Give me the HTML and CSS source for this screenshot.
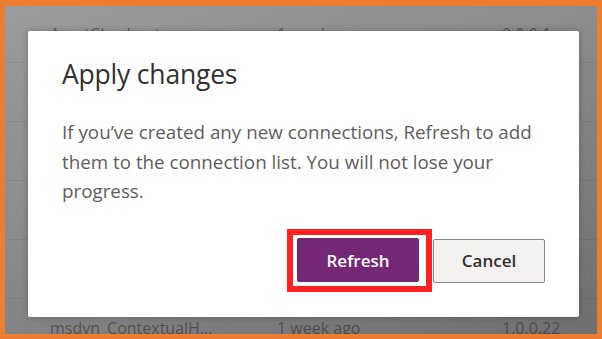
FILE: index.html
```html
<!DOCTYPE html>
<html>
<head>
<meta charset="utf-8">
<link rel="stylesheet" href="styles.css">
</head>
<body>
<div class="frame">
  <div class="list">
    <div class="row first"><span class="c-name">AssetCheckout</span><span class="c-date">1 week ago</span><span class="c-ver">0.0.0.1</span></div>
    <div class="row"></div>
    <div class="row"></div>
    <div class="row"></div>
    <div class="row"></div>
    <div class="row"><span class="c-name">msdyn_ContextualH...</span><span class="c-date">1 week ago</span><span class="c-ver">1.0.0.22</span></div>
  </div>
  <div class="dialog">
    <h1 class="title">Apply changes</h1>
    <p class="msg">If you’ve created any new connections, Refresh to add them to the connection list. You will not lose your progress.</p>
    <div class="actions">
      <span class="highlight"><button class="btn primary">Refresh</button></span>
      <button class="btn secondary">Cancel</button>
    </div>
  </div>
</div>
</body>
</html>
```
FILE: styles.css
```css
html, body {
  margin: 0;
  padding: 0;
}
body {
  font-family: "Open Sans", "Noto Sans", sans-serif;
}
.frame {
  position: relative;
  width: 602px;
  height: 339px;
  box-sizing: border-box;
  border: 5px solid #ed7d31;
  border-top-width: 6px;
  border-bottom-width: 5px;
  background: linear-gradient(160deg, #9c9c9c 0%, #8a8a8a 45%, #6f6f6f 100%);
  overflow: hidden;
}
.list {
  display: flex;
  flex-direction: column;
}
.row {
  height: 59px;
  box-sizing: border-box;
  border-bottom: 1px solid rgba(0,0,0,0.06);
  display: flex;
  align-items: center;
  font-size: 16px;
  color: rgba(40,40,40,0.55);
}
.row.first {
  height: 57px;
}
.c-name { width: 227px; padding-left: 45px; }
.c-date { width: 225px; }
.c-ver { }
.dialog {
  position: absolute;
  left: 23px;
  top: 25px;
  width: 551px;
  height: 286px;
  box-sizing: border-box;
  background: #fff;
  border-radius: 2px;
  box-shadow: 0 0 6px rgba(0,0,0,0.25);
  padding: 25px 34px 25px 34px;
  display: flex;
  flex-direction: column;
}
.title {
  margin: 0;
  font-size: 26.5px;
  font-weight: 400;
  line-height: 36px;
  color: #323130;
  letter-spacing: -0.2px;
}
.msg {
  margin: 26px 0 0 0;
  font-size: 18.8px;
  line-height: 29.5px;
  color: #605e5c;
  width: 480px;
}
.actions {
  display: flex;
  justify-content: flex-end;
  align-items: center;
  margin-top: auto;
}
.highlight {
  display: inline-flex;
  border: 6px solid #ff2121;
  padding: 3px 7px 4px 4px;
}
.btn {
  font-family: "Open Sans", "Noto Sans", sans-serif;
  font-size: 17px;
  font-weight: 600;
  height: 44px;
  border-radius: 2px;
  cursor: pointer;
}
.primary {
  width: 122px;
  background: #742774;
  color: #fff;
  border: 1px solid #742774;
}
.secondary {
  width: 112px;
  margin-left: 1px;
  background: #f3f2f1;
  color: #323130;
  border: 1px solid #8a8886;
}
```
